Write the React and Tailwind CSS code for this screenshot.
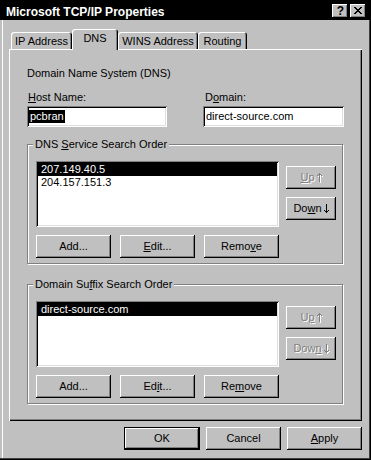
import React from "react";

const raised =
  "shadow-[inset_-1px_-1px_0_#000,inset_1px_1px_0_#fff,inset_-2px_-2px_0_#808080]";
const sunken =
  "shadow-[inset_1px_1px_0_#808080,inset_-1px_-1px_0_#fff,inset_2px_2px_0_#000,inset_-2px_-2px_0_#dfdfdf]";

function Btn({ children, w = "w-[75px]", disabled, def }) {
  return (
    <div
      className={`flex h-[23px] ${w} items-center justify-center bg-[#c0c0c0] leading-[13px] ${
        def ? "border border-black" : ""
      } ${raised} ${disabled ? "text-[#808080] [text-shadow:1px_1px_0_#fff]" : "text-black"}`}
    >
      {children}
    </div>
  );
}

function U({ children }) {
  return <span className="underline underline-offset-1">{children}</span>;
}

// small pixel arrow drawn beside Up / Down labels
function Arrow({ down, disabled }) {
  const px = down
    ? [[2, 0, 1, 9], [1, 7, 3, 1], [0, 6, 1, 1], [4, 6, 1, 1]]
    : [[2, 0, 1, 9], [1, 1, 3, 1], [0, 2, 1, 1], [4, 2, 1, 1]];
  return (
    <svg
      width="5"
      height="9"
      viewBox="0 0 5 9"
      shapeRendering="crispEdges"
      className={`ml-[2px] mb-[1px] ${disabled ? "[filter:drop-shadow(1px_1px_0_#fff)]" : ""}`}
    >
      {px.map(([x, y, w, h], i) => (
        <rect key={i} x={x} y={y} width={w} height={h} fill="currentColor" />
      ))}
    </svg>
  );
}

function Tab({ label, w, active }) {
  if (active) {
    return (
      <div
        className={`relative z-10 -mb-px h-[21px] ${w} rounded-t-[3px] bg-[#c0c0c0] pt-[3px] text-center leading-[13px] shadow-[inset_1px_1px_0_#fff,inset_-1px_0_0_#000,inset_-2px_0_0_#808080]`}
      >
        {label}
      </div>
    );
  }
  return (
    <div
      className={`h-[17px] ${w} rounded-t-[3px] bg-[#c0c0c0] pt-[3px] text-center leading-[13px] shadow-[inset_1px_1px_0_#fff,inset_-1px_0_0_#000,inset_-2px_0_0_#808080]`}
    >
      {label}
    </div>
  );
}

function Group({ title, className = "", children }) {
  return (
    <div
      className={`relative h-[120px] w-[316px] border border-[#808080] pl-[8px] pt-[16px] shadow-[1px_1px_0_#fff,inset_1px_1px_0_#fff] ${className}`}
    >
      <span className="absolute left-[5px] top-[-7px] bg-[#c0c0c0] px-[2px] leading-[13px]">
        {title}
      </span>
      {children}
    </div>
  );
}

function CloseGlyph() {
  const r = [
    [0, 0, 2], [6, 0, 2],
    [1, 1, 2], [5, 1, 2],
    [2, 2, 4],
    [3, 3, 2],
    [2, 4, 4],
    [1, 5, 2], [5, 5, 2],
    [0, 6, 2], [6, 6, 2],
  ];
  return (
    <svg width="8" height="7" viewBox="0 0 8 7" shapeRendering="crispEdges">
      {r.map(([x, y, w], i) => (
        <rect key={i} x={x} y={y} width={w} height="1" fill="#000" />
      ))}
    </svg>
  );
}

export default function App() {
  return (
    <div className="flex h-[460px] w-[371px] flex-col bg-[#c0c0c0] font-['Liberation_Sans',Arial,sans-serif] text-[11px] text-black shadow-[inset_-1px_-1px_0_#000,inset_-2px_-2px_0_#404040,inset_2px_0_0_#c0c0c0,inset_3px_0_0_#fff]">
      {/* title bar */}
      <div className="flex h-[20px] bg-black">
        <div className="pl-[6px] pt-[5px] text-[12px] font-bold leading-[14px] text-white">
          Microsoft TCP/IP Properties
        </div>
        <div className="ml-auto mt-[4px] flex gap-[2px] pr-[5px]">
          <div className={`flex h-[14px] w-[16px] items-center justify-center bg-[#c0c0c0] pl-px text-[12px] font-bold leading-[14px] ${raised}`}>
            ?
          </div>
          <div className={`flex h-[14px] w-[16px] items-center justify-center bg-[#c0c0c0] pb-px ${raised}`}>
            <CloseGlyph />
          </div>
        </div>
      </div>

      {/* tabs */}
      <div className="mt-[9px] flex h-[20px] items-end pl-[11px]">
        <Tab label="IP Address" w="w-[61px]" />
        <Tab label="DNS" w="w-[46px]" active />
        <Tab label="WINS Address" w="w-[80px]" />
        <Tab label="Routing" w="w-[49px]" />
      </div>

      {/* panel */}
      <div className="ml-[9px] h-[372px] w-[353px] pl-[18px] pt-[18px] shadow-[inset_1px_1px_0_#fff,inset_-1px_-1px_0_#000,inset_-2px_-2px_0_#808080]">
        <div className="leading-[13px]">Domain Name System (DNS)</div>

        <div className="mt-[11px] flex">
          <div className="w-[140px]">
            <div className="pl-px leading-[13px]">
              <U>H</U>ost Name:
            </div>
            <div className={`mt-[2px] flex h-[21px] items-center bg-white pl-[2px] ${sunken}`}>
              <span className="bg-black px-px leading-[13px] text-white">pcbran</span>
            </div>
          </div>
          <div className="ml-[36px] w-[141px]">
            <div className="pl-[2px] leading-[13px]">
              D<U>o</U>main:
            </div>
            <div className={`mt-[2px] flex h-[21px] items-center bg-white pl-[3px] leading-[13px] ${sunken}`}>
              direct-source.com
            </div>
          </div>
        </div>

        <Group
          className="mt-[17px]"
          title={
            <>
              DNS <U>S</U>ervice Search Order
            </>
          }
        >
          <div className="flex">
            <div className={`h-[66px] w-[243px] bg-white p-[2px] ${sunken}`}>
              <div className="h-[13px] bg-black pl-[3px] leading-[13px] text-white">207.149.40.5</div>
              <div className="h-[13px] pl-[3px] leading-[13px]">204.157.151.3</div>
            </div>
            <div className="ml-[7px] mt-[5px] flex flex-col gap-[8px]">
              <Btn w="w-[50px]" disabled>
                <U>U</U>p<Arrow disabled />
              </Btn>
              <Btn w="w-[50px]">
                Do<U>w</U>n<Arrow down />
              </Btn>
            </div>
          </div>
          <div className="mt-[8px] flex gap-[9px]">
            <Btn>Add...</Btn>
            <Btn>
              <U>E</U>dit...
            </Btn>
            <Btn>
              Remo<U>v</U>e
            </Btn>
          </div>
        </Group>

        <Group
          className="mt-[20px]"
          title={
            <>
              Domain Su<U>f</U>fix Search Order
            </>
          }
        >
          <div className="flex">
            <div className={`h-[66px] w-[243px] bg-white p-[2px] ${sunken}`}>
              <div className="h-[13px] bg-black pl-[3px] leading-[13px] text-white">direct-source.com</div>
            </div>
            <div className="ml-[7px] mt-[5px] flex flex-col gap-[8px]">
              <Btn w="w-[50px]" disabled>
                U<U>p</U><Arrow disabled />
              </Btn>
              <Btn w="w-[50px]" disabled>
                Dow<U>n</U><Arrow down disabled />
              </Btn>
            </div>
          </div>
          <div className="mt-[8px] flex gap-[9px]">
            <Btn>Add...</Btn>
            <Btn>
              Ed<U>i</U>t...
            </Btn>
            <Btn>
              Re<U>m</U>ove
            </Btn>
          </div>
        </Group>
      </div>

      {/* dialog buttons */}
      <div className="mt-[6px] flex justify-end gap-[6px] pr-[9px]">
        <Btn w="w-[76px]" def>
          OK
        </Btn>
        <Btn>Cancel</Btn>
        <Btn>
          <U>A</U>pply
        </Btn>
      </div>
    </div>
  );
}
